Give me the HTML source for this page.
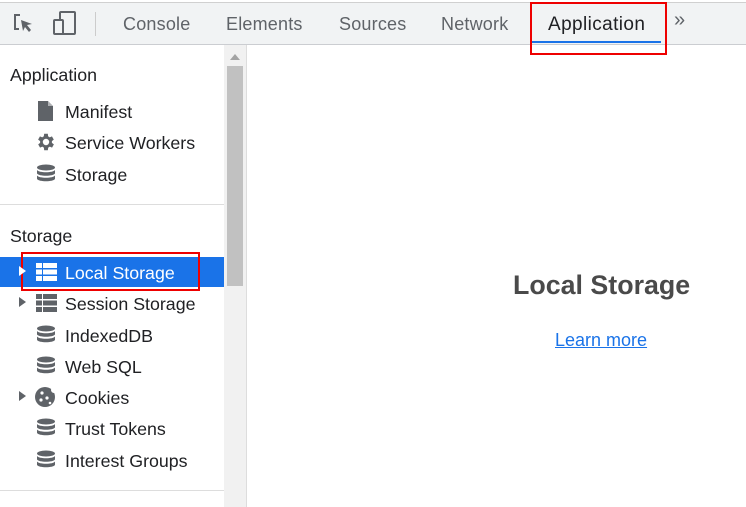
<!DOCTYPE html><html><head><style>
body{margin:0;width:746px;height:507px;overflow:hidden;background:#fff;font-family:"Liberation Sans",sans-serif;position:relative;color:#202124}
.tb{position:absolute;top:2px;left:0;width:746px;height:41px;background:#f1f3f4;border-top:1px solid #d0d0d0;border-bottom:1px solid #cbcdd1}
.tab{position:absolute;top:14px;font-size:18px;color:#5f6368;letter-spacing:0.2px}
.t{position:absolute;font-size:17.8px;white-space:nowrap;margin-top:1px}
.ic{position:absolute}
.sb{position:absolute;left:224px;top:45px;width:22px;height:462px;background:#f1f1f1}
.th{position:absolute;left:227px;top:66px;width:16px;height:220px;background:#c1c1c1}
</style></head><body>
<div class="tb"></div>
<svg class="ic" style="left:12px;top:13px" width="22" height="22" viewBox="0 0 22 22"><path d="M8 2H3v14h4" fill="none" stroke="#5f6368" stroke-width="2"/><path d="M9 7l11 4-5 1 4 5-2 2-4-5-2 4z" fill="#5f6368"/></svg>
<svg class="ic" style="left:53px;top:11px" width="24" height="24" viewBox="0 0 24 24"><rect x="7" y="1" width="15" height="22" rx="1" fill="none" stroke="#5f6368" stroke-width="2"/><rect x="1" y="9" width="9" height="14" rx="1" fill="#f1f3f4" stroke="#5f6368" stroke-width="2"/></svg>
<div style="position:absolute;left:95px;top:12px;width:1px;height:24px;background:#ccc"></div>
<div class="tab" style="left:123px">Console</div>
<div class="tab" style="left:226px">Elements</div>
<div class="tab" style="left:339px">Sources</div>
<div class="tab" style="left:441px">Network</div>
<div class="tab" style="left:548px;color:#202124;font-size:19px;letter-spacing:0.4px">Application</div>
<div style="position:absolute;left:532px;top:41px;width:129px;height:2px;background:#1a73e8"></div>
<div style="position:absolute;left:530px;top:2px;width:133px;height:49px;border:2px solid #e00"></div>
<div class="tab" style="left:674px;top:9px;font-size:20px">»</div>

<div class="t" style="left:10px;top:64px">Application</div>
<svg class="ic" style="left:37px;top:100px" width="18" height="22"><path d="M1 1h10l5 5v15H1z" fill="#5f6368"/><path d="M11 1v5h5" fill="#fff" opacity=".5"/></svg>
<div class="t" style="left:65px;top:101px">Manifest</div>
<svg class="ic" style="left:35px;top:131px" width="22" height="22" viewBox="0 0 24 24"><path fill="#5f6368" d="M19.4 13a7.5 7.5 0 000-2l2.1-1.6-2-3.5-2.5 1a7 7 0 00-1.7-1L15 3h-4l-.4 2.9a7 7 0 00-1.7 1l-2.5-1-2 3.5L6.6 11a7.5 7.5 0 000 2l-2.1 1.6 2 3.5 2.5-1a7 7 0 001.7 1L11 21h4l.4-2.9a7 7 0 001.7-1l2.5 1 2-3.5zM13 15.5A3.5 3.5 0 1113 8.5a3.5 3.5 0 010 7z" transform="translate(-1 0)"/></svg>
<div class="t" style="left:65px;top:132px">Service Workers</div>
<svg class="ic db" style="left:36px;top:164px" width="20" height="21"><g fill="#5f6368"><ellipse cx="10" cy="3.5" rx="9" ry="3"/><path d="M1 6c2 3 16 3 18 0v3.5c-2 3-16 3-18 0z"/><path d="M1 11.5c2 3 16 3 18 0V15c-2 3-16 3-18 0z"/></g></svg>
<div class="t" style="left:65px;top:164px">Storage</div>
<div style="position:absolute;left:0;top:204px;width:224px;height:1px;background:#ddd"></div>

<div class="t" style="left:10px;top:225px">Storage</div>
<div style="position:absolute;left:0;top:257px;width:224px;height:30px;background:#1a73e8"></div>
<div style="position:absolute;left:21px;top:252px;width:175px;height:35px;border:2px solid #e00"></div>
<svg class="ic" style="left:19px;top:266px" width="8" height="10"><path d="M0 0l7 5-7 5z" fill="#fff"/></svg>
<svg class="ic" style="left:36px;top:263px" width="21" height="18"><g fill="#fff"><rect x="0" y="0" width="6" height="5"/><rect x="7" y="0" width="14" height="5"/><rect x="0" y="6.5" width="6" height="5"/><rect x="7" y="6.5" width="14" height="5"/><rect x="0" y="13" width="6" height="5"/><rect x="7" y="13" width="14" height="5"/></g></svg>
<div class="t" style="left:65px;top:262px;color:#fff">Local Storage</div>
<svg class="ic" style="left:19px;top:297px" width="8" height="10"><path d="M0 0l7 5-7 5z" fill="#5f6368"/></svg>
<svg class="ic" style="left:36px;top:294px" width="21" height="18"><g fill="#5f6368"><rect x="0" y="0" width="6" height="5"/><rect x="7" y="0" width="14" height="5"/><rect x="0" y="6.5" width="6" height="5"/><rect x="7" y="6.5" width="14" height="5"/><rect x="0" y="13" width="6" height="5"/><rect x="7" y="13" width="14" height="5"/></g></svg>
<div class="t" style="left:65px;top:293px">Session Storage</div>
<svg class="ic" style="left:36px;top:325px" width="20" height="21"><g fill="#5f6368"><ellipse cx="10" cy="3.5" rx="9" ry="3"/><path d="M1 6c2 3 16 3 18 0v3.5c-2 3-16 3-18 0z"/><path d="M1 11.5c2 3 16 3 18 0V15c-2 3-16 3-18 0z"/></g></svg>
<div class="t" style="left:65px;top:325px">IndexedDB</div>
<svg class="ic" style="left:36px;top:356px" width="20" height="21"><g fill="#5f6368"><ellipse cx="10" cy="3.5" rx="9" ry="3"/><path d="M1 6c2 3 16 3 18 0v3.5c-2 3-16 3-18 0z"/><path d="M1 11.5c2 3 16 3 18 0V15c-2 3-16 3-18 0z"/></g></svg>
<div class="t" style="left:65px;top:356px">Web SQL</div>
<svg class="ic" style="left:19px;top:391px" width="8" height="10"><path d="M0 0l7 5-7 5z" fill="#5f6368"/></svg>
<svg class="ic" style="left:34px;top:386px" width="22" height="22"><circle cx="11" cy="11" r="10" fill="#5f6368"/><g fill="#fff"><circle cx="8" cy="7" r="1.6"/><circle cx="13" cy="12" r="1.6"/><circle cx="7" cy="14" r="1.6"/><circle cx="16" cy="17" r="1.3"/></g><circle cx="20" cy="4" r="3" fill="#fff"/></svg>
<div class="t" style="left:65px;top:387px">Cookies</div>
<svg class="ic" style="left:36px;top:418px" width="20" height="21"><g fill="#5f6368"><ellipse cx="10" cy="3.5" rx="9" ry="3"/><path d="M1 6c2 3 16 3 18 0v3.5c-2 3-16 3-18 0z"/><path d="M1 11.5c2 3 16 3 18 0V15c-2 3-16 3-18 0z"/></g></svg>
<div class="t" style="left:65px;top:418px">Trust Tokens</div>
<svg class="ic" style="left:36px;top:450px" width="20" height="21"><g fill="#5f6368"><ellipse cx="10" cy="3.5" rx="9" ry="3"/><path d="M1 6c2 3 16 3 18 0v3.5c-2 3-16 3-18 0z"/><path d="M1 11.5c2 3 16 3 18 0V15c-2 3-16 3-18 0z"/></g></svg>
<div class="t" style="left:65px;top:450px">Interest Groups</div>
<div style="position:absolute;left:0;top:490px;width:224px;height:1px;background:#ddd"></div>

<div class="sb"></div><div class="th"></div>
<svg class="ic" style="left:229px;top:53px" width="12" height="8"><path d="M1 7l5-6 5 6z" fill="#a3a3a3"/></svg>
<div style="position:absolute;left:246px;top:45px;width:1px;height:462px;background:#ddd"></div>

<div class="t" style="left:513px;top:269px;font-size:26.8px;font-weight:bold;color:#4a4a4a">Local Storage</div>
<div class="t" style="left:555px;top:329px;color:#1a73e8;text-decoration:underline;font-size:18px">Learn more</div>
</body></html>
